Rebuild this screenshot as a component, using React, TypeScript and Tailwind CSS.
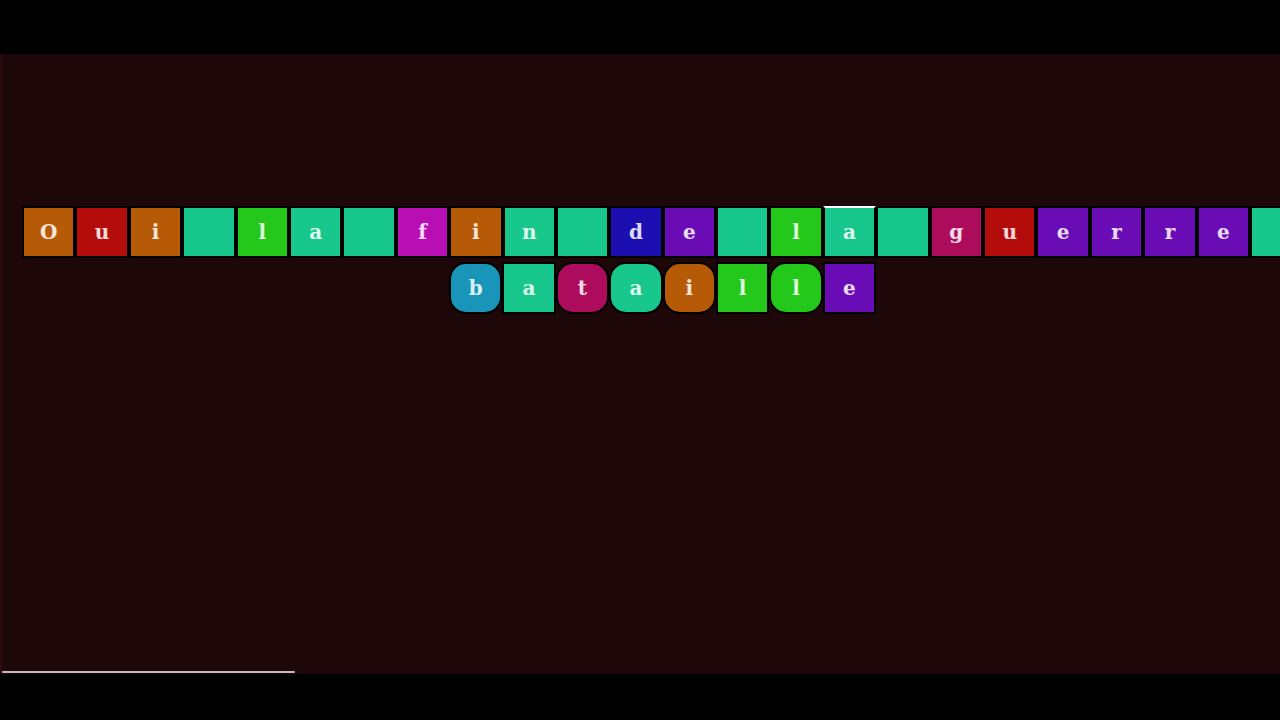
import React from 'react';

type Tile = { ch: string; bg: string; round?: boolean; mark?: boolean };

const C = {
  orange: 'bg-[#b65a08]',
  red: 'bg-[#b40b0b]',
  teal: 'bg-[#17c78b]',
  green: 'bg-[#24c81b]',
  magenta: 'bg-[#b80eb4]',
  blue: 'bg-[#1c0fb2]',
  purple: 'bg-[#6a0cb6]',
  crimson: 'bg-[#ad0c5c]',
  cyan: 'bg-[#1895b8]',
};

const sentence: Tile[] = [
  { ch: 'O', bg: C.orange },
  { ch: 'u', bg: C.red },
  { ch: 'i', bg: C.orange },
  { ch: '', bg: C.teal },
  { ch: 'l', bg: C.green },
  { ch: 'a', bg: C.teal },
  { ch: '', bg: C.teal },
  { ch: 'f', bg: C.magenta },
  { ch: 'i', bg: C.orange },
  { ch: 'n', bg: C.teal },
  { ch: '', bg: C.teal },
  { ch: 'd', bg: C.blue },
  { ch: 'e', bg: C.purple },
  { ch: '', bg: C.teal },
  { ch: 'l', bg: C.green },
  { ch: 'a', bg: C.teal, mark: true },
  { ch: '', bg: C.teal },
  { ch: 'g', bg: C.crimson },
  { ch: 'u', bg: C.red },
  { ch: 'e', bg: C.purple },
  { ch: 'r', bg: C.purple },
  { ch: 'r', bg: C.purple },
  { ch: 'e', bg: C.purple },
  { ch: '', bg: C.teal },
];

const word: Tile[] = [
  { ch: 'b', bg: C.cyan, round: true },
  { ch: 'a', bg: C.teal },
  { ch: 't', bg: C.crimson, round: true },
  { ch: 'a', bg: C.teal, round: true },
  { ch: 'i', bg: C.orange, round: true },
  { ch: 'l', bg: C.green },
  { ch: 'l', bg: C.green, round: true },
  { ch: 'e', bg: C.purple },
];

const Cell: React.FC<{ t: Tile }> = ({ t }) => (
  <div
    className={`shrink-0 w-[53.4px] h-[52px] border-2 border-black flex items-center justify-center ${t.bg} ${
      t.round ? 'rounded-[17px]' : ''
    } ${t.mark ? 'border-t-white' : ''}`}
  >
    <span className="text-[20px] font-bold text-white/85 leading-none pb-[1px]">{t.ch}</span>
  </div>
);

export default function App() {
  return (
    <div className="w-[1280px] h-[720px] bg-black overflow-hidden" style={{ fontFamily: '"DejaVu Serif", serif' }}>
      <div className="h-[54px] bg-black" />
      <div className="relative h-[620px] bg-[#1d0709] border-l-2 border-[#2a0a0e] overflow-hidden">
        <div className="pt-[152px] pl-[20px] flex flex-col gap-[4px]">
          <div className="flex">
            {sentence.map((t, i) => (
              <Cell key={i} t={t} />
            ))}
          </div>
          <div className="flex pl-[427px]">
            {word.map((t, i) => (
              <Cell key={i} t={t} />
            ))}
          </div>
        </div>
        {/* video progress */}
        <div className="absolute left-0 bottom-[1px] w-[293px] h-[2px] bg-[#c9b9c2] rounded-full" />
      </div>
      <div className="h-[46px] bg-black" />
    </div>
  );
}
